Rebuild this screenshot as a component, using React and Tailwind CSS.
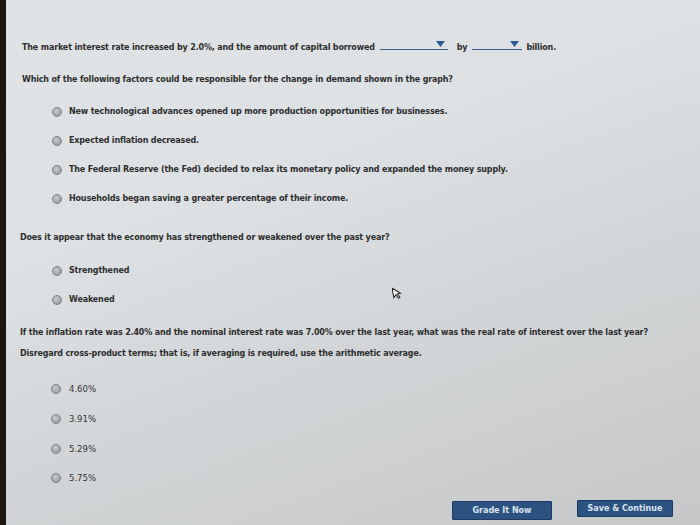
import React from 'react';

const font = { fontFamily: '"DejaVu Sans", Verdana, sans-serif' };
const textCls = 'text-[8px] font-semibold text-[#2e2e2e] leading-[12px] tracking-[-0.16px]';

const FACTORS = [
  'New technological advances opened up more production opportunities for businesses.',
  'Expected inflation decreased.',
  'The Federal Reserve (the Fed) decided to relax its monetary policy and expanded the money supply.',
  'Households began saving a greater percentage of their income.',
];
const RATES = ['4.60%', '3.91%', '5.29%', '5.75%'];

function Radio() {
  return (
    <span className="inline-block w-[10px] h-[10px] rounded-full border border-[#7d8082] bg-[radial-gradient(circle_at_40%_35%,#c9cbcc,#8e9193)] shrink-0" />
  );
}

function Option({ label, mt }) {
  return (
    <div className={`flex items-center h-[12px] pl-[30px] gap-[7px] ${mt}`}>
      <Radio />
      <span className={textCls}>{label}</span>
    </div>
  );
}

function Dropdown({ w }) {
  return (
    <span className={`relative inline-block h-[11px] border-b border-[#3a5c8a] ${w}`}>
      <svg className="absolute right-[3px] top-[2px]" width="9" height="6" viewBox="0 0 9 6">
        <path d="M0 0 H9 L4.5 6 Z" fill="#2d5b96" />
      </svg>
    </span>
  );
}

export default function App() {
  const mts = ['mt-[20px]', 'mt-[17px]', 'mt-[17px]', 'mt-[17px]'];
  const rateMts = ['mt-[23px]', 'mt-[18px]', 'mt-[18px]', 'mt-[17px]'];
  return (
    <div className="relative w-[700px] h-[525px] overflow-hidden flex bg-[linear-gradient(160deg,#dfe3e6_0%,#dde1e4_35%,#d3d6d8_60%,#c6c7c8_100%)]" style={font}>
      <div className="w-[6px] h-full bg-[#1d1512] shrink-0" />
      <div className="flex-1 pt-[42px] pl-[16px] pr-[27px] flex flex-col">
        <div className={`flex items-end h-[12px] ${textCls}`}>
          <span>The market interest rate increased by 2.0%, and the amount of capital borrowed</span>
          <span className="ml-[5px]"><Dropdown w="w-[68px]" /></span>
          <span className="ml-[9px]">by</span>
          <span className="ml-[5px]"><Dropdown w="w-[50px]" /></span>
          <span className="ml-[4px]">billion.</span>
        </div>

        <div className={`mt-[20px] h-[12px] ${textCls}`}>
          Which of the following factors could be responsible for the change in demand shown in the graph?
        </div>
        {FACTORS.map((f, i) => (
          <Option key={f} label={f} mt={mts[i]} />
        ))}

        <div className={`mt-[27px] h-[12px] -ml-[2px] ${textCls}`}>
          Does it appear that the economy has strengthened or weakened over the past year?
        </div>
        <Option label="Strengthened" mt="mt-[21px]" />
        <Option label="Weakened" mt="mt-[17px]" />

        <div className={`mt-[21px] h-[12px] -ml-[2px] ${textCls}`}>
          If the inflation rate was 2.40% and the nominal interest rate was 7.00% over the last year, what was the real rate of interest over the last year?
        </div>
        <div className={`mt-[9px] h-[12px] -ml-[2px] ${textCls}`}>
          Disregard cross-product terms; that is, if averaging is required, use the arithmetic average.
        </div>
        {RATES.map((r, i) => (
          <div key={r} className={`flex items-center h-[12px] pl-[29px] gap-[8px] ${rateMts[i]}`}>
            <Radio />
            <span className="text-[8.5px] text-[#333] leading-[12px]">{r}</span>
          </div>
        ))}

        <div className="mt-[17px] flex justify-end gap-[25px]">
          <button className="w-[100px] h-[19px] bg-[#2c5282] border border-[#1d3a63] text-[#dce4ee] text-[8px] font-semibold rounded-[1px]">
            Grade It Now
          </button>
          <button className="w-[96px] h-[17px] -mt-[1px] bg-[#2c5282] border border-[#1d3a63] text-[#dce4ee] text-[8px] font-semibold rounded-[1px]">
            Save &amp; Continue
          </button>
        </div>
      </div>

      <svg className="absolute left-[392px] top-[286px]" width="12" height="14" viewBox="0 0 12 14">
        <path d="M1 1 L1 11 L3.5 8.5 L5.5 12.5 L7 11.8 L5 8 L8.5 8 Z" fill="#f2f2f2" stroke="#222" strokeWidth="1" transform="rotate(-12 5 7)" />
      </svg>
    </div>
  );
}
